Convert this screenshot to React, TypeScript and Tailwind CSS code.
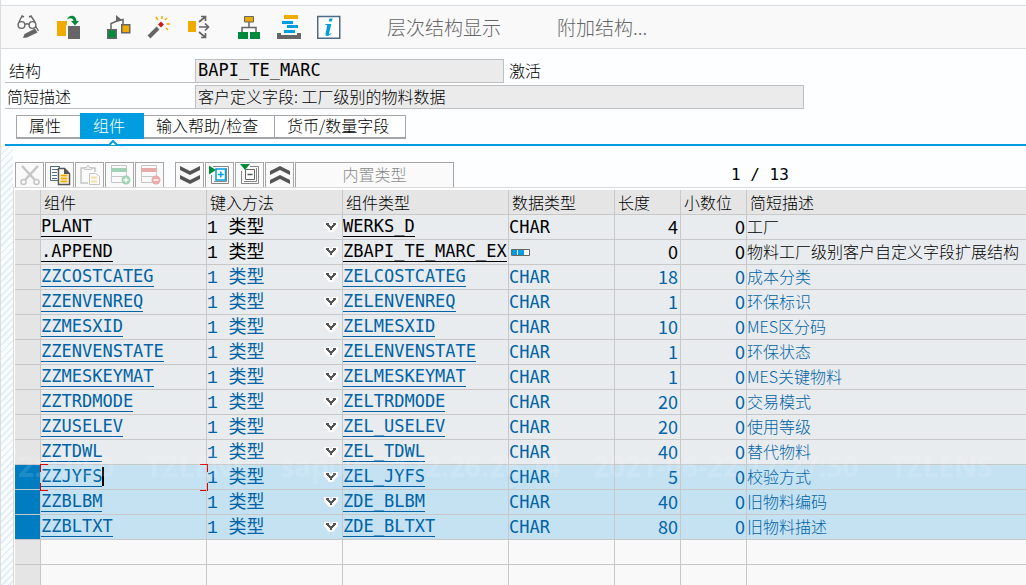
import { ReactNode } from "react";
import clsx from "clsx";

type Row = {
  name: string;
  type: string;
  dataType?: string;
  length: number;
  decimals: number;
  text: string;
  state: "standard" | "custom" | "selected";
  focused?: boolean;
};

const rows: Row[] = [
  { name: "PLANT", type: "WERKS_D", dataType: "CHAR", length: 4, decimals: 0, text: "工厂", state: "standard" },
  { name: ".APPEND", type: "ZBAPI_TE_MARC_EX", length: 0, decimals: 0, text: "物料工厂级别客户自定义字段扩展结构", state: "standard" },
  { name: "ZZCOSTCATEG", type: "ZELCOSTCATEG", dataType: "CHAR", length: 18, decimals: 0, text: "成本分类", state: "custom" },
  { name: "ZZENVENREQ", type: "ZELENVENREQ", dataType: "CHAR", length: 1, decimals: 0, text: "环保标识", state: "custom" },
  { name: "ZZMESXID", type: "ZELMESXID", dataType: "CHAR", length: 10, decimals: 0, text: "MES区分码", state: "custom" },
  { name: "ZZENVENSTATE", type: "ZELENVENSTATE", dataType: "CHAR", length: 1, decimals: 0, text: "环保状态", state: "custom" },
  { name: "ZZMESKEYMAT", type: "ZELMESKEYMAT", dataType: "CHAR", length: 1, decimals: 0, text: "MES关键物料", state: "custom" },
  { name: "ZZTRDMODE", type: "ZELTRDMODE", dataType: "CHAR", length: 20, decimals: 0, text: "交易模式", state: "custom" },
  { name: "ZZUSELEV", type: "ZEL_USELEV", dataType: "CHAR", length: 20, decimals: 0, text: "使用等级", state: "custom" },
  { name: "ZZTDWL", type: "ZEL_TDWL", dataType: "CHAR", length: 40, decimals: 0, text: "替代物料", state: "custom" },
  { name: "ZZJYFS", type: "ZEL_JYFS", dataType: "CHAR", length: 5, decimals: 0, text: "校验方式", state: "selected", focused: true },
  { name: "ZZBLBM", type: "ZDE_BLBM", dataType: "CHAR", length: 40, decimals: 0, text: "旧物料编码", state: "selected" },
  { name: "ZZBLTXT", type: "ZDE_BLTXT", dataType: "CHAR", length: 80, decimals: 0, text: "旧物料描述", state: "selected" },
];

const headers = ["组件", "键入方法", "组件类型", "数据类型", "长度", "小数位", "简短描述"];

const mono = "font-['DejaVu_Sans_Mono','Noto_Sans_CJK_SC',monospace] text-[17px]";

function IconButton({ label, children }: { label: string; children: ReactNode }) {
  return (
    <button type="button" aria-label={label} className="size-6 shrink-0">
      <svg viewBox="0 0 24 24" className="size-6" fill="none">
        {children}
      </svg>
    </button>
  );
}

function Toolbar() {
  return (
    <div className="mt-[5px] flex h-11 items-center border-y border-[#dcdcdc] bg-[#f9f9f9] pl-4">
      <div className="flex gap-4">
        <IconButton label="显示/更改">
          <g stroke="#666" strokeWidth="1.4">
            <circle cx="4.5" cy="10" r="3.4" />
            <circle cx="15.5" cy="10" r="3.4" />
            <path d="M8 9.5q2-1.5 4 0M2 7 5 1l2 1M12 2l2-1 4 6M18.5 11l3 5" />
          </g>
          <path d="M6 23 7.5 19 18 13.5l2.5 4L10 22.5z" fill="#666" />
        </IconButton>
        <IconButton label="其他对象">
          <path d="M0 6h10v4H9v11H0z" fill="#f0ab00" />
          <path d="M11 11h12v13H11z" fill="#666" />
          <path d="M10 4.500c1.500-5 9-5.500 9.500 1.500H22l-4 4.500L14 6h2.500c-.5-3-3.500-3.500-6.500-1.500z" fill="#008a3b" />
        </IconButton>
      </div>
      <div className="ml-[26px] flex gap-4">
        <IconButton label="使用处清单">
          <path d="M4 14V8.500l6-2.500 6-1.500V10" stroke="#666" strokeWidth="1.5" />
          <path d="m9 0 6 5-6 2z" fill="#666" />
          <path d="M.75 14.75h8.500v8.500H.75z" fill="#008a3b" stroke="#666" strokeWidth="1.5" />
          <path d="M14.750 9.750h8v8h-8z" fill="#f0ab00" stroke="#666" strokeWidth="1.5" />
        </IconButton>
        <IconButton label="激活">
          <path d="m2 22 9-9" stroke="#666" strokeWidth="4" />
          <path d="m14 6.500 3 3-3 3-3-3z" fill="#cc1919" />
          <path d="m9 2 2 3M15 1v3M20 3l-2 2M19.500 9H23M19 13l2 2" stroke="#f0ab00" strokeWidth="1.500" />
        </IconButton>
        <IconButton label="分解">
          <path d="M1 6h8v11H1z" fill="#f0ab00" />
          <path d="m12 7 6-5M12 12h9M12 17l6 5M14 1.500h4.500V6M18 8.500l3.500 3.500-3.500 3.500M14 22.500h4.500V18" stroke="#666" strokeWidth="1.700" />
        </IconButton>
      </div>
      <div className="ml-[26px] flex gap-4">
        <IconButton label="层次结构">
          <path d="M12 7v6M5 18v-5.500h14V18" stroke="#666" strokeWidth="1.500" />
          <path d="M7.500 1.500h9v5.500h-9z" fill="#f0ab00" stroke="#666" />
          <path d="M1 17h10v7H1zM13 17h10v7H13z" fill="#008a3b" />
        </IconButton>
        <IconButton label="对齐">
          <path d="M7 0h14v4H7z" fill="#f0ab00" />
          <path d="M5 6h11v3H5zM10 10h11v3H10zM7 15h11v3H7z" fill="#009de0" />
          <path d="M0 18h4v2h16v-2h4v6H0z" fill="#666" />
        </IconButton>
        <IconButton label="信息">
          <path d="M.75 1.500h22v21.750h-22z" fill="#fff" stroke="#4d6b85" strokeWidth="1.500" />
          <path d="M12.500 3.500h3l-.7 3h-3zM8.500 9h5.800l-2.200 9.200q-.2 1.100 1 .6l1.100-.7-.3 1.100q-5.900 4-5.400-.5L10.300 10H8.300z" fill="#009de0" />
        </IconButton>
      </div>
      <div className="ml-[46px] flex gap-14 text-[19px] text-[#666]">
        <button type="button">层次结构显示</button>
        <button type="button">附加结构...</button>
      </div>
    </div>
  );
}

function StructureForm() {
  const label = "h-6 w-[190px] border-b border-[#bfbfbf] leading-[22px]";
  const input = "h-6 border border-[#bfbfbf] bg-[#ebebeb] px-[2px] pb-[2px]";

  return (
    <div className="ml-1 mt-[10px] flex flex-col gap-[2px]">
      <div className="flex h-6">
        <label htmlFor="structure" className={clsx(label, "pl-1")}>
          结构
        </label>
        <input id="structure" readOnly defaultValue="BAPI_TE_MARC" className={clsx(mono, input, "w-[309px]")} />
        <span className="pl-[5px] leading-[22px]">激活</span>
      </div>
      <div className="flex h-6">
        <label htmlFor="description" className={clsx(label, "pl-[2px]")}>
          简短描述
        </label>
        <input id="description" readOnly defaultValue="客户定义字段: 工厂级别的物料数据" className={clsx(input, "w-[609px]")} />
      </div>
    </div>
  );
}

function Tabs() {
  const tab = "mt-[2px] h-6 border border-[#a6a6a6] border-b-2 bg-white pb-[3px] text-left leading-[18px]";

  return (
    <div role="tablist" className="ml-1 mt-1 flex h-[33px] items-start border-b-2 border-[#009de0] pl-[11px]">
      <button type="button" role="tab" className={clsx(tab, "w-16 border-r-0 pl-3")}>
        属性
      </button>
      <button
        type="button"
        role="tab"
        aria-selected
        className="relative h-[26px] w-16 bg-[#009de0] pb-[2px] pl-[13px] text-left leading-[22px] text-white"
      >
        组件
        <svg viewBox="0 0 8 6" className="absolute -bottom-[7px] left-[29px] h-[6px] w-2">
          <path d="M0 5 4 1l4 4" fill="#fff" stroke="#009de0" strokeWidth="2" />
        </svg>
      </button>
      <button type="button" role="tab" className={clsx(tab, "w-[130px] border-x-0 pl-3")}>
        输入帮助/检查
      </button>
      <button type="button" role="tab" className={clsx(tab, "w-[132px] pl-3")}>
        货币/数量字段
      </button>
    </div>
  );
}

function TableButton({ label, disabled, children }: { label: string; disabled?: boolean; children: ReactNode }) {
  return (
    <button
      type="button"
      aria-label={label}
      disabled={disabled}
      className="flex h-[25px] w-[29px] items-center justify-center border border-b-0 border-[#a6a6a6] bg-[#fafafa]"
    >
      <svg viewBox="0 0 22 22" className={clsx("size-[22px]", disabled && "opacity-35")} fill="none">
        {children}
      </svg>
    </button>
  );
}

function TableToolbar() {
  return (
    <div className="flex h-[25px] gap-px pl-[2px]">
      <TableButton label="剪切" disabled>
        <path d="m3 2 13 14M19 2 6 16" stroke="#666" strokeWidth="2.500" />
        <circle cx="4.500" cy="18" r="2.500" stroke="#666" strokeWidth="1.500" />
        <circle cx="17.500" cy="18" r="2.500" stroke="#666" strokeWidth="1.500" />
      </TableButton>
      <TableButton label="复制">
        <path d="M1.500 2.500h9v14h-9z" fill="#fff" stroke="#4d6b85" />
        <path d="M3 5.500h6M3 8.500h5M3 11.500h5M3 14.500h5" stroke="#4d6b85" />
        <path d="M9.500 4.500h6l5 5v11h-11z" fill="#fff" stroke="#555" strokeWidth="1.500" />
        <path d="M15 4v6h6z" fill="#555" />
        <path d="M11.500 11.500h7M11.500 14.500h7M11.500 17.500h7" stroke="#f0ab00" strokeWidth="2" />
      </TableButton>
      <TableButton label="粘贴" disabled>
        <path d="M9 19H2V4h14v4" stroke="#666" strokeWidth="1.500" />
        <path d="M5.500 5.500v-2h2l1-2h1l1 2h2v2z" fill="#ddd" stroke="#666" />
        <path d="M10.500 9.500h6l4 3v8h-10z" fill="#fff" stroke="#666" />
        <path d="M12 13.500h6M12 17.500h6" stroke="#f0ab00" strokeWidth="2" />
      </TableButton>
      <TableButton label="插入行" disabled>
        <path d="M2.500 1.500h15v17h-15zM3 12.500h14" stroke="#666" />
        <path d="M2 4h16v4H2z" fill="#008a3b" />
        <circle cx="17" cy="16" r="4.500" fill="#008a3b" />
        <path d="M17 13.500v5M14.500 16h5" stroke="#fff" strokeWidth="1.500" />
      </TableButton>
      <TableButton label="删除行" disabled>
        <path d="M2.500 1.500h15v17h-15zM3 12.500h14" stroke="#666" />
        <path d="M2 4h16v4H2z" fill="#cc1919" />
        <circle cx="17" cy="16" r="4.500" fill="#cc1919" />
        <path d="M14.500 16h5" stroke="#fff" strokeWidth="1.500" />
      </TableButton>
      <div className="ml-[10px] flex gap-px">
        <TableButton label="全部展开">
          <path d="M1 2v4l10 5 10-5V2L11 7zM1 11v4l10 5 10-5v-4l-10 5z" fill="#555" />
        </TableButton>
        <TableButton label="展开包含">
          <path d="M4 2.500h15.500v17h-17V11M17.500 4v13.500H5" stroke="#888" />
          <path d="M7 5h9.500v11H7z" fill="#fff" stroke="#009de0" strokeWidth="1.500" />
          <path d="M11.800 7.500v6M8.800 10.500h6" stroke="#009de0" strokeWidth="1.500" />
          <path d="M0 1.500 7 6l-7 4.500z" fill="#008a3b" />
        </TableButton>
        <TableButton label="折叠包含">
          <path d="M11 2.500h8.500v17h-17V7M17.500 4v13.500H5" stroke="#888" />
          <path d="M6.500 5.500h9v10h-9z" fill="#fff" stroke="#666" />
          <path d="M8.500 10.500h5" stroke="#555" strokeWidth="1.500" />
          <path d="M1 0h10L6 6z" fill="#008a3b" />
        </TableButton>
        <TableButton label="全部折叠">
          <path d="M1 11V7l10-5 10 5v4L11 6zM1 20v-4l10-5 10 5v4l-10-5z" fill="#555" />
        </TableButton>
        <button
          type="button"
          disabled
          className="h-[25px] w-[159px] border border-b-0 border-[#a6a6a6] bg-[#fafafa] pb-[3px] leading-[22px] text-[#8a8a8a]"
        >
          内置类型
        </button>
      </div>
      <div className="ml-[276px] self-center font-['DejaVu_Sans_Mono',monospace]">1 / 13</div>
    </div>
  );
}

function FocusFrame() {
  const corner = "absolute size-2 border-[#e00000]";
  return (
    <>
      <span className={clsx(corner, "-left-px -top-px border-l border-t")} />
      <span className={clsx(corner, "-right-[2px] -top-px border-r border-t")} />
      <span className={clsx(corner, "-bottom-[2px] -left-px border-b border-l")} />
      <span className={clsx(corner, "-bottom-[2px] -right-[2px] border-b border-r")} />
    </>
  );
}

function CellLink({ children }: { children: ReactNode }) {
  return (
    <a href="#" className="inline-block h-[22px] border-b border-current align-top leading-[22px]">
      {children}
    </a>
  );
}

function ComponentTable() {
  const cell = "h-[25px] border-b border-r border-[#c8c8c8] p-0 leading-[22px] whitespace-nowrap";
  const number = "pb-[2px] font-normal text-[18px] text-right";

  return (
    <table className="w-full table-fixed border-separate border-spacing-0">
      <colgroup>
        <col className="w-[26px]" />
        <col className="w-[166px]" />
        <col className="w-[136px]" />
        <col className="w-[166px]" />
        <col className="w-[106px]" />
        <col className="w-[66px]" />
        <col className="w-[66px]" />
        <col />
      </colgroup>
      <thead>
        <tr className="bg-[#e5e5e5]">
          <th className={cell} />
          {headers.map((header) => (
            <th key={header} className={clsx(cell, "pl-[3px] text-left font-light last:border-r-0")}>
              {header}
            </th>
          ))}
        </tr>
      </thead>
      <tbody>
        {rows.map((row) => (
          <tr
            key={row.name}
            className={clsx(
              row.state === "selected" ? "bg-[#c5e2f3]" : "bg-[#e9ecef]",
              row.state === "standard" ? "text-black" : "text-[#0063a5]",
            )}
          >
            <td className={clsx(cell, row.state === "selected" ? "bg-[#007cc0]" : "bg-[#e5e5e5]")} />
            <td className={clsx(cell, mono, "relative align-top")}>
              <CellLink>{row.name}</CellLink>
              {row.focused && <span className="mt-[2px] inline-block h-[19px] w-[2px] bg-black align-top" />}
              {row.focused && <FocusFrame />}
            </td>
            <td className={cell}>
              <div className="relative flex h-6 items-center">
                <select
                  aria-label={`${row.name} 键入方法`}
                  className="h-6 w-full appearance-none bg-transparent pt-px font-['Liberation_Mono','Noto_Sans_CJK_SC',monospace] text-[18px] leading-6 font-normal"
                >
                  <option>1 类型</option>
                </select>
                <svg viewBox="0 0 14 10" className="pointer-events-none absolute right-1 h-[10px] w-[14px]">
                  <path d="M0 0h6v2h2V0h6v4l-5 6H5L0 4z" fill="#fff" />
                  <path d="M2 1h3v2h1v1h2V3h1V1h3v2h-1v1h-1v1h-1v1H8v2H6V6H5V5H4V4H3V3H2z" fill="#555" />
                </svg>
              </div>
            </td>
            <td className={clsx(cell, mono, "align-top")}>
              <CellLink>{row.type}</CellLink>
            </td>
            <td className={clsx(cell, mono)}>
              {row.dataType ?? (
                <svg viewBox="0 0 20 8" className="ml-[2px] mt-[2px] h-2 w-5">
                  <path d="M.500.500h18v6H.500z" fill="#fff" stroke="#666" />
                  <path d="M1 1h5v5H1zM7 1h6v5H7z" fill="#009de0" />
                </svg>
              )}
            </td>
            <td className={clsx(cell, number, "pr-[2px]")}>{row.length}</td>
            <td className={clsx(cell, number, "pr-px")}>{row.decimals}</td>
            <td className={clsx(cell, "border-r-0 pb-[2px]")}>{row.text}</td>
          </tr>
        ))}
        {[0, 1].map((row) => (
          <tr key={row} className="bg-[#f9f9f9]">
            <td className={clsx(cell, "bg-[#e5e5e5]")} />
            {headers.map((header) => (
              <td key={header} className={clsx(cell, "last:border-r-0")} />
            ))}
          </tr>
        ))}
      </tbody>
    </table>
  );
}

export default function App() {
  return (
    <div className="h-screen overflow-hidden border-l border-[#dcdcdc] bg-[#fdfeff] font-['Noto_Sans_CJK_SC',sans-serif] text-base leading-6 font-light text-black">
      <Toolbar />
      <StructureForm />
      <Tabs />
      <div className="bg-[repeating-linear-gradient(135deg,#e3f0f9_0px,#e3f0f9_2px,#fbfdff_2px,#fbfdff_5px)] pl-3">
        <div className="bg-[#fcfeff] pt-4">
          <TableToolbar />
          <div className="relative border-l border-t border-[#d8d8d8] bg-white pl-px pt-[2px]">
            <ComponentTable />
            <div className="pointer-events-none absolute left-1 top-[258px] flex gap-8 font-['Open_Sans',sans-serif] text-[28px] leading-10 font-bold whitespace-pre text-white/15">
              <span>2:27:50</span>
              <span>TZLENS</span>
              <span>sap09</span>
              <span>172.26.26.14</span>
              <span>2021-06-22 17:27:50</span>
              <span>TZLENS</span>
            </div>
          </div>
        </div>
      </div>
    </div>
  );
}
